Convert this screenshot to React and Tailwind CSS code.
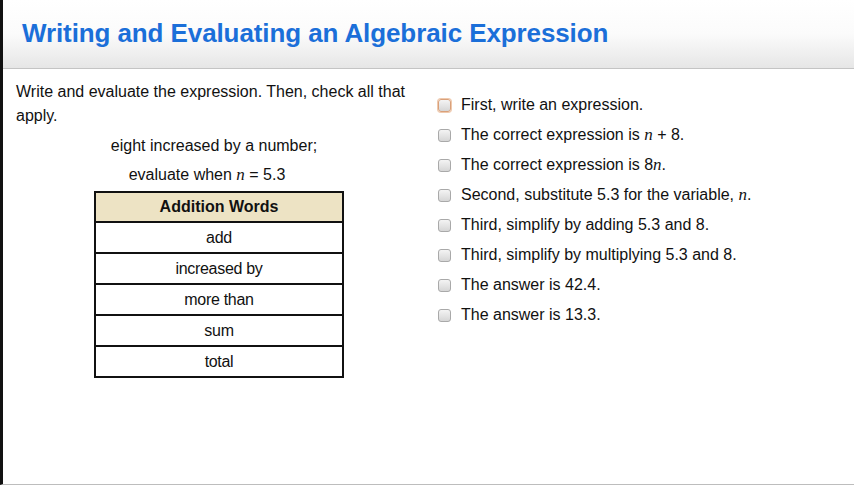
import React from 'react';

const words = ['add', 'increased by', 'more than', 'sum', 'total'];

const options = [
  { key: 'a', label: <>First, write an expression.</>, focus: true },
  { key: 'b', label: <>The correct expression is <V>n</V> + 8.</> },
  { key: 'c', label: <>The correct expression is 8<V>n</V>.</> },
  { key: 'd', label: <>Second, substitute 5.3 for the variable, <V>n</V>.</> },
  { key: 'e', label: <>Third, simplify by adding 5.3 and 8.</> },
  { key: 'f', label: <>Third, simplify by multiplying 5.3 and 8.</> },
  { key: 'g', label: <>The answer is 42.4.</> },
  { key: 'h', label: <>The answer is 13.3.</> },
];

function V({ children }) {
  return <span className="italic font-['Liberation_Serif',serif] text-[17px]">{children}</span>;
}

function Box({ focus }) {
  return (
    <span
      className={
        'inline-block w-[13px] h-[13px] rounded-[3px] shrink-0 bg-gradient-to-b from-[#f4f4f4] to-[#d6d6d6] border ' +
        (focus ? 'border-[#d9a07a] shadow-[0_0_0_1px_#efc9ad]' : 'border-[#a9a9a9]')
      }
    />
  );
}

export default function App() {
  return (
    <div className="w-[854px] h-[485px] bg-white border-l-[3px] border-l-[#111] border-b border-b-[#bdbdbd] font-['Liberation_Sans',Arial,sans-serif] text-[#111] overflow-hidden flex flex-col">
      <header className="h-[69px] shrink-0 bg-gradient-to-b from-white via-[#fbfbfb] to-[#e6e6e6] border-b border-[#c4c4c4] flex items-center pl-[19px] pb-[1px]">
        <h1 className="text-[26px] font-bold text-[#1b6fd9] tracking-[-0.1px]">
          Writing and Evaluating an Algebraic Expression
        </h1>
      </header>

      <div className="flex pt-[11px]">
        <div className="w-[405px] pl-[13px] shrink-0">
          <p className="text-[16px] leading-[24px]">
            Write and evaluate the expression. Then, check all that apply.
          </p>
          <div className="text-center text-[16px] mt-[6px] pl-[4px]">
            <p className="leading-[24px]">eight increased by a number;</p>
            <p className="leading-[24px] mt-[5px] pr-[14px]">
              evaluate when <V>n</V> = 5.3
            </p>
          </div>
          <table className="ml-[78px] mt-[4px] w-[250px] border-collapse border-2 border-[#111] text-[16px]">
            <thead>
              <tr>
                <th className="h-[30px] bg-[#ede3c4] border-2 border-[#111] font-bold">Addition Words</th>
              </tr>
            </thead>
            <tbody>
              {words.map(w => (
                <tr key={w}>
                  <td className="h-[31px] border-2 border-[#111] text-center tracking-[-0.3px]">{w}</td>
                </tr>
              ))}
            </tbody>
          </table>
        </div>

        <ul className="pl-[30px] pt-[10px] flex flex-col">
          {options.map(o => (
            <li key={o.key} className="h-[30px] flex items-center gap-[10px] text-[16px]">
              <Box focus={o.focus} />
              <span>{o.label}</span>
            </li>
          ))}
        </ul>
      </div>
    </div>
  );
}
